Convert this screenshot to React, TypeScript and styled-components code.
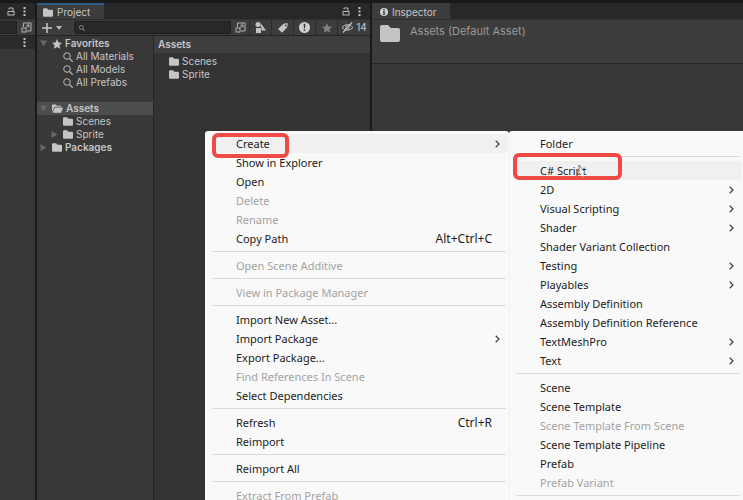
import React from "react";
import styled, { createGlobalStyle, css } from "styled-components";

const GlobalStyle = createGlobalStyle`
  * { box-sizing: border-box; }
  body { margin: 0; background: #191919; }
  button, input { font: inherit; color: inherit; margin: 0; padding: 0; border: 0; background: none; }
  ul, h1, h2 { margin: 0; padding: 0; font: inherit; list-style: none; }
  svg { display: block; flex: none; }
`;

const Editor = styled.div`
  position: relative;
  display: grid;
  grid-template-columns: 35px 333px 1fr;
  gap: 2px;
  height: 100vh;
  padding-top: 3px;
  overflow: hidden;
  background: #191919;
  color: #c6c6c6;
  font: 10px/13px Inter, "Liberation Sans", sans-serif;
`;

const Panel = styled.section`
  display: flex;
  flex-direction: column;
  min-width: 0;
  background: #383838;
`;

const TabBar = styled.header`
  display: flex;
  justify-content: space-between;
  height: 16px;
  background: #282828;
`;

const Tab = styled.button<{ $active?: boolean }>`
  display: flex;
  align-items: center;
  gap: 4px;
  height: 16px;
  padding: 0 14px 0 ${(p) => (p.$active ? "6px" : "8px")};
  background: #3c3c3c;
  border-top: 2px solid ${(p) => (p.$active ? "#2c5d87" : "#3c3c3c")};
`;

const TabActions = styled.div`
  display: flex;
  align-items: center;
  gap: 8px;
  margin-left: auto;
  padding-right: 9px;
`;

const IconButton = styled.button`
  display: flex;
  align-items: center;
  justify-content: center;
`;

const Toolbar = styled.div`
  display: flex;
  align-items: stretch;
  height: 17px;
  background: #3c3c3c;
  border-top: 1px solid #303030;
  border-bottom: 1px solid #232323;
`;

const AddButton = styled.button`
  display: flex;
  align-items: center;
  gap: 4px;
  padding: 0 12px 0 5px;
`;

const SearchBox = styled.label<{ $flush?: boolean }>`
  display: flex;
  flex: 1;
  align-items: center;
  gap: 4px;
  min-width: 0;
  margin: 1px 0;
  padding-left: 4px;
  background: #282828;
  border: 1px solid #202020;
  ${(p) => (p.$flush ? css`border-left: 0;` : css`border-radius: 3px 0 0 3px;`)}
`;

const SearchInput = styled.input`
  flex: 1;
  min-width: 0;
  outline: none;
`;

const ToolButton = styled.button<{ $wide?: boolean }>`
  display: flex;
  align-items: center;
  justify-content: center;
  gap: 2px;
  width: ${(p) => (p.$wide ? "33px" : "22px")};
  border-left: 1px solid #2b2b2b;
`;

const SearchWindowButton = styled(IconButton)`
  width: 18px;
`;

const SceneHeader = styled.div`
  display: flex;
  align-items: center;
  justify-content: flex-end;
  height: 13px;
  padding-right: 9px;
  background: #2b2b2b;
`;

const ProjectBody = styled.div`
  display: grid;
  grid-template-columns: 117px 1fr;
  flex: 1;
`;

const Tree = styled.ul`
  && { padding-top: 1px; }
  border-right: 1px solid #252525;
`;

const TreeRow = styled.button<{ $level: number; $bold?: boolean; $selected?: boolean }>`
  display: flex;
  align-items: center;
  gap: 3px;
  width: 100%;
  height: 13px;
  padding-left: ${(p) => 3 + p.$level * 11}px;
  white-space: nowrap;
  font-weight: ${(p) => (p.$bold ? 600 : 400)};
  background: ${(p) => (p.$selected ? "#4d4d4d" : "transparent")};
`;

const TreeGap = styled.li`
  height: 13px;
`;

const Twisty = styled.span`
  display: flex;
  width: 9px;
`;

const Assets = styled.div`
  background: #333333;
`;

const AssetsTitle = styled.h2`
  && {
    height: 17px;
    padding: 2px 4px;
    line-height: 13px;
    font-weight: 600;
  }
  background: #3e3e3e;
`;

const AssetList = styled.ul`
  && { padding-top: 2px; }
`;

const AssetRow = styled.button`
  display: flex;
  align-items: center;
  gap: 3px;
  height: 13px;
  padding-left: 15px;
`;

const InspectorHeader = styled.div`
  display: flex;
  gap: 10px;
  height: 45px;
  padding: 5px 8px;
  background: #3c3c3c;
  border-top: 1px solid #303030;
  border-bottom: 1px solid #262626;
`;

const InspectorTitle = styled.h1`
  && {
    color: #9a9a9a;
    font-size: 11px;
    line-height: 13px;
  }
`;

const Menus = styled.div`
  position: absolute;
  top: 131px;
  left: 205px;
  display: flex;
  align-items: flex-start;
  color: #1c1c1c;
  font: 11px/19px "Noto Sans", "Open Sans", sans-serif;
`;

const MenuPanel = styled.div<{ $sub?: boolean }>`
  width: ${(p) => (p.$sub ? "238px" : "304px")};
  padding: 3px ${(p) => (p.$sub ? "5px" : "1px")} 20px ${(p) => (p.$sub ? "6px" : "7px")};
  background: #f9f9f9;
  border-radius: 3px;
  ${(p) => p.$sub && css`border-left: 1px solid #f2f2f2;`}
`;

const MenuRow = styled.button<{ $hover?: boolean }>`
  position: relative;
  display: flex;
  align-items: center;
  width: 100%;
  height: 19px;
  padding: 0 8px 0 24px;
  text-align: left;
  white-space: nowrap;
  border-radius: 3px;
  background: ${(p) => (p.$hover ? "#f0f0f0" : "transparent")};
  &:disabled { color: #a3a3a3; }
`;

const MenuLabel = styled.span`
  flex: 1;
`;

const Shortcut = styled.span`
  padding-right: 8px;
  font-size: 12px;
`;

const Separator = styled.hr`
  height: 1px;
  margin: 3px 2px 4px 0;
  border: 0;
  background: #dcdcdc;
`;

const Mark = styled.span<{ $wide?: boolean }>`
  position: absolute;
  top: ${(p) => (p.$wide ? "-8px" : "-1px")};
  left: ${(p) => (p.$wide ? "-3px" : "0")};
  width: ${(p) => (p.$wide ? "109px" : "77px")};
  height: ${(p) => (p.$wide ? "27px" : "25px")};
  border: 4px solid #ee4b47;
  border-radius: 6px;
`;

const Pointer = styled.span`
  position: absolute;
  top: 4px;
  left: 62px;
`;

function Folder({ width = 11 }: { width?: number }) {
  return (
    <svg width={width} height={Math.round(width * 0.85)} viewBox="0 0 20 17" fill="#c4c4c4" aria-hidden="true">
      <path d="M0 2Q0 0 2 0H8L11 3H18Q20 3 20 5V15Q20 17 18 17H2Q0 17 0 15Z" />
    </svg>
  );
}

const OpenFolder = () => (
  <svg width="11" height="9" viewBox="0 0 12 9" fill="#c4c4c4" aria-hidden="true">
    <path d="M0 8V1Q0 0 1 0H4L5.500 1.500H9.500Q10 1.500 10 2.500H2.500L.8 7Z" />
    <path d="M3 3.500H12L10 9H.8Z" />
  </svg>
);

const Star = ({ color = "#c4c4c4", size = 10 }: { color?: string; size?: number }) => (
  <svg width={size} height={size} viewBox="0 0 20 20" fill={color} aria-hidden="true">
    <path d="M10 0L13 6.800L20 7.600L14.800 12.400L16.300 19.500L10 15.900L3.700 19.500L5.200 12.400L0 7.600L7 6.800Z" />
  </svg>
);

const Lens = ({ size = 10 }: { size?: number }) => (
  <svg width={size} height={size} viewBox="0 0 10 10" fill="none" stroke="#b8b8b8" aria-hidden="true">
    <circle cx="4" cy="4" r="3.300" />
    <path d="M6.400 6.400L9.600 9.600" strokeWidth="1.300" />
  </svg>
);

const Lock = () => (
  <svg width="8" height="9" viewBox="0 0 8 9" fill="none" stroke="#b8b8b8" aria-hidden="true">
    <rect x="1" y="4.500" width="6" height="3.500" />
    <path d="M2 2.500V1H6V4.500" />
  </svg>
);

const Kebab = () => (
  <svg width="3" height="9" viewBox="0 0 3 9" fill="#c4c4c4" aria-hidden="true">
    <rect x=".5" width="2" height="2" />
    <rect x=".5" y="3.500" width="2" height="2" />
    <rect x=".5" y="7" width="2" height="2" />
  </svg>
);

const Popout = () => (
  <svg width="11" height="11" viewBox="0 0 11 11" fill="none" stroke="#b0b0b0" aria-hidden="true">
    <path d="M2.500 5V1H10V9H6" />
    <rect x="1" y="6" width="4" height="4" />
    <path d="M4.500 6L8 3M5.500 3H8V5.500" />
  </svg>
);

const Triangle = ({ open, color = "#686868" }: { open?: boolean; color?: string }) => (
  <svg width="7" height="7" viewBox="0 0 7 7" fill={color} aria-hidden="true">
    <path d={open ? "M0 .5H7L3.500 6.500Z" : "M.5 0L6.500 3.500L.5 7Z"} />
  </svg>
);

const Plus = () => (
  <svg width="10" height="10" viewBox="0 0 10 10" stroke="#c8c8c8" strokeWidth="1.500" aria-hidden="true">
    <path d="M5 0V10M0 5H10" />
  </svg>
);

const DownArrow = () => (
  <svg width="6" height="4" viewBox="0 0 6 4" fill="#b8b8b8" aria-hidden="true">
    <path d="M0 0H6L3 4Z" />
  </svg>
);

const Shapes = () => (
  <svg width="11" height="11" viewBox="0 0 11 11" fill="#c4c4c4" aria-hidden="true">
    <circle cx="3" cy="2.500" r="2.500" />
    <rect x="1" y="6" width="5" height="5" />
    <path d="M6 1.500L11 8.500H6.500V5H5.500Z" />
  </svg>
);

const Tag = () => (
  <svg width="10" height="10" viewBox="0 0 10 10" fill="#c4c4c4" aria-hidden="true">
    <path fillRule="evenodd" d="M0 6L5.500 .8L9 0L9.800 1L9.200 4.300L4 9.700ZM7 2A.9 .9 0 1 0 8.500 3A.9 .9 0 0 0 7 2Z" />
  </svg>
);

const Alert = () => (
  <svg width="11" height="11" viewBox="0 0 11 11" aria-hidden="true">
    <circle cx="5.500" cy="5.500" r="5.500" fill="#d0d0d0" />
    <path d="M4.600 1.800H6.400L6 6.500H5ZM4.700 7.500H6.300V9H4.700Z" fill="#333" />
  </svg>
);

const HiddenEye = () => (
  <svg width="13" height="11" viewBox="0 0 13 11" fill="none" stroke="#bcbcbc" aria-hidden="true">
    <path d="M1 5.500Q6.500 -.5 12 5.500Q6.500 11 1 5.500Z" />
    <circle cx="6.500" cy="5.500" r="1.800" />
    <path d="M2 10.500L11 .5" strokeWidth="1.300" />
  </svg>
);

const Info = () => (
  <svg width="8" height="8" viewBox="0 0 8 8" aria-hidden="true">
    <circle cx="4" cy="4" r="4" fill="#d0d0d0" />
    <path d="M3.300 1H4.700V2.300H3.300ZM3 3.100H4.700V6H5.300V6.800H2.800V6H3.400V3.900H3Z" fill="#333" />
  </svg>
);

const Chevron = () => (
  <svg width="5" height="8" viewBox="0 0 5 8" fill="none" stroke="#404040" strokeWidth="1.200" aria-hidden="true">
    <path d="M.7 .8L4 4L.7 7.200" />
  </svg>
);

const Cursor = () => (
  <svg width="8" height="13" viewBox="0 0 8 13" aria-hidden="true">
    <path d="M1 0V10L3 8.200L5 12L6.300 11.300L4.700 7.800H7.500Z" fill="#f4f4f4" />
    <path d="M1 10V0L7 7.500" fill="none" stroke="#5a5a5a" strokeWidth=".8" />
    <path d="M4.500 11.500L6.300 11.300" stroke="#8a8a8a" strokeWidth=".8" />
  </svg>
);

type Item = {
  label: string;
  off?: boolean;
  arrow?: boolean;
  keys?: string;
  marked?: boolean;
  pointer?: boolean;
};

const mainGroups: Item[][] = [
  [
    { label: "Create", arrow: true, marked: true },
    { label: "Show in Explorer" },
    { label: "Open" },
    { label: "Delete", off: true },
    { label: "Rename", off: true },
    { label: "Copy Path", keys: "Alt+Ctrl+C" },
  ],
  [{ label: "Open Scene Additive", off: true }],
  [{ label: "View in Package Manager", off: true }],
  [
    { label: "Import New Asset..." },
    { label: "Import Package", arrow: true },
    { label: "Export Package..." },
    { label: "Find References In Scene", off: true },
    { label: "Select Dependencies" },
  ],
  [{ label: "Refresh", keys: "Ctrl+R" }, { label: "Reimport" }],
  [{ label: "Reimport All" }],
  [{ label: "Extract From Prefab", off: true }],
];

const createGroups: Item[][] = [
  [{ label: "Folder" }],
  [
    { label: "C# Script", marked: true, pointer: true },
    { label: "2D", arrow: true },
    { label: "Visual Scripting", arrow: true },
    { label: "Shader", arrow: true },
    { label: "Shader Variant Collection" },
    { label: "Testing", arrow: true },
    { label: "Playables", arrow: true },
    { label: "Assembly Definition" },
    { label: "Assembly Definition Reference" },
    { label: "TextMeshPro", arrow: true },
    { label: "Text", arrow: true },
  ],
  [
    { label: "Scene" },
    { label: "Scene Template" },
    { label: "Scene Template From Scene", off: true },
    { label: "Scene Template Pipeline" },
    { label: "Prefab" },
    { label: "Prefab Variant", off: true },
  ],
  [],
];

function Menu({ groups, sub, name }: { groups: Item[][]; sub?: boolean; name: string }) {
  return (
    <MenuPanel role="menu" aria-label={name} $sub={sub}>
      {groups.map((group, i) => (
        <React.Fragment key={i}>
          {i > 0 && <Separator />}
          {group.map((item) => (
            <MenuRow key={item.label} role="menuitem" disabled={item.off} $hover={item.marked}>
              <MenuLabel>{item.label}</MenuLabel>
              {item.keys && <Shortcut>{item.keys}</Shortcut>}
              {item.arrow && <Chevron />}
              {item.marked && <Mark $wide={sub} />}
              {item.pointer && (
                <Pointer>
                  <Cursor />
                </Pointer>
              )}
            </MenuRow>
          ))}
        </React.Fragment>
      ))}
    </MenuPanel>
  );
}

function TreeItem(props: {
  label: string;
  level: number;
  icon: React.ReactNode;
  twisty?: "open" | "closed";
  bold?: boolean;
  selected?: boolean;
}) {
  return (
    <li>
      <TreeRow $level={props.level} $bold={props.bold} $selected={props.selected}>
        <Twisty>{props.twisty && <Triangle open={props.twisty === "open"} />}</Twisty>
        {props.icon}
        {props.label}
      </TreeRow>
    </li>
  );
}

const PanelActions = () => (
  <TabActions>
    <IconButton aria-label="Lock">
      <Lock />
    </IconButton>
    <IconButton aria-label="Panel menu">
      <Kebab />
    </IconButton>
  </TabActions>
);

export default function App() {
  return (
    <>
      <GlobalStyle />
      <Editor>
        <Panel aria-label="Hierarchy">
          <TabBar>
            <PanelActions />
          </TabBar>
          <Toolbar>
            <SearchBox $flush>
              <SearchInput aria-label="Search hierarchy" />
            </SearchBox>
            <SearchWindowButton aria-label="Open search window">
              <Popout />
            </SearchWindowButton>
          </Toolbar>
          <SceneHeader>
            <IconButton aria-label="Scene menu">
              <Kebab />
            </IconButton>
          </SceneHeader>
        </Panel>

        <Panel aria-label="Project">
          <TabBar>
            <Tab $active>
              <Folder width={10} />
              Project
            </Tab>
            <PanelActions />
          </TabBar>
          <Toolbar>
            <AddButton aria-label="Add asset">
              <Plus />
              <DownArrow />
            </AddButton>
            <SearchBox>
              <Lens size={6} />
              <SearchInput aria-label="Search project" />
            </SearchBox>
            <SearchWindowButton aria-label="Open search window">
              <Popout />
            </SearchWindowButton>
            <ToolButton aria-label="Search by type">
              <Shapes />
            </ToolButton>
            <ToolButton aria-label="Search by label">
              <Tag />
            </ToolButton>
            <ToolButton aria-label="Search by log type">
              <Alert />
            </ToolButton>
            <ToolButton aria-label="Save search">
              <Star color="#808080" />
            </ToolButton>
            <ToolButton $wide aria-label="Hidden packages">
              <HiddenEye />
              14
            </ToolButton>
          </Toolbar>
          <ProjectBody>
            <Tree>
              <TreeItem level={0} bold twisty="open" icon={<Star />} label="Favorites" />
              <TreeItem level={1} icon={<Lens />} label="All Materials" />
              <TreeItem level={1} icon={<Lens />} label="All Models" />
              <TreeItem level={1} icon={<Lens />} label="All Prefabs" />
              <TreeGap />
              <TreeItem level={0} bold selected twisty="open" icon={<OpenFolder />} label="Assets" />
              <TreeItem level={1} icon={<Folder width={10} />} label="Scenes" />
              <TreeItem level={1} twisty="closed" icon={<Folder width={10} />} label="Sprite" />
              <TreeItem level={0} bold twisty="closed" icon={<Folder width={10} />} label="Packages" />
            </Tree>
            <Assets>
              <AssetsTitle>Assets</AssetsTitle>
              <AssetList>
                {["Scenes", "Sprite"].map((name) => (
                  <li key={name}>
                    <AssetRow>
                      <Folder width={10} />
                      {name}
                    </AssetRow>
                  </li>
                ))}
              </AssetList>
            </Assets>
          </ProjectBody>
        </Panel>

        <Panel aria-label="Inspector">
          <TabBar>
            <Tab>
              <Info />
              Inspector
            </Tab>
          </TabBar>
          <InspectorHeader>
            <Folder width={20} />
            <InspectorTitle>Assets (Default Asset)</InspectorTitle>
          </InspectorHeader>
        </Panel>

        <Menus>
          <Menu name="Assets" groups={mainGroups} />
          <Menu name="Create" groups={createGroups} sub />
        </Menus>
      </Editor>
    </>
  );
}
